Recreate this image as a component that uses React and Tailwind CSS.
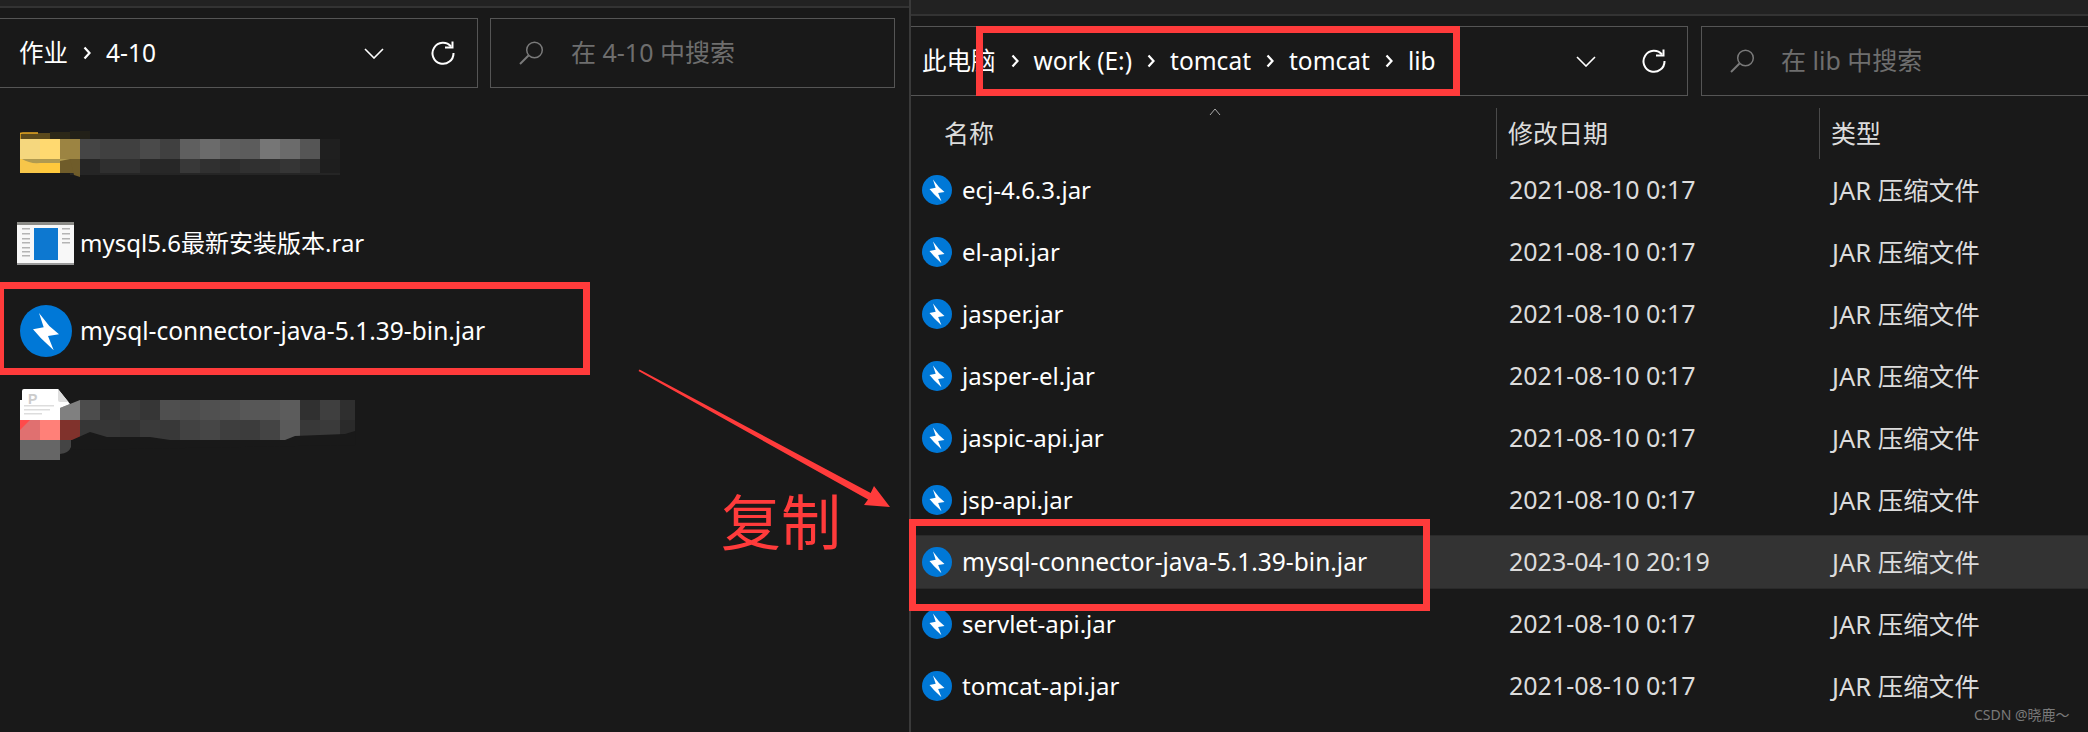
import { Fragment } from 'react';

const files = [
  { name: 'ecj-4.6.3.jar', date: '2021-08-10 0:17' },
  { name: 'el-api.jar', date: '2021-08-10 0:17' },
  { name: 'jasper.jar', date: '2021-08-10 0:17' },
  { name: 'jasper-el.jar', date: '2021-08-10 0:17' },
  { name: 'jaspic-api.jar', date: '2021-08-10 0:17' },
  { name: 'jsp-api.jar', date: '2021-08-10 0:17' },
  { name: 'mysql-connector-java-5.1.39-bin.jar', date: '2023-04-10 20:19', selected: true },
  { name: 'servlet-api.jar', date: '2021-08-10 0:17' },
  { name: 'tomcat-api.jar', date: '2021-08-10 0:17' },
];

const FolderMosaic = [
  ['#f5d77e', '#ffd970', '#9c8442', '#454545', '#404040', '#404040', '#4a4a4a', '#404040', '#5f5f5f', '#6b6b6b', '#5f5f5f', '#5c5c5c', '#767676', '#6b6b6b', '#555555', '#1f1f1f'],
  ['#f7c64a', '#ffc93c', '#6f5c2a', '#252525', '#2f2f2f', '#303030', '#282828', '#272727', '#383838', '#303030', '#2c2c2c', '#303030', '#303030', '#353535', '#2e2e2e', '#1e1e1e'],
];

const PdfMosaic = [
  ['#ffffff', '#f2f2f2', '#808080', '#4c4c4c', '#333333', '#3b3b3b', '#363636', '#4f4f4f', '#4c4c4c', '#505050', '#525252', '#575757', '#575757', '#5c5c5c', '#303030', '#3f3f3f', '#2f2f2f'],
  ['#e07070', '#ff8078', '#80322c', '#363636', '#363636', '#333333', '#3a3a3a', '#383838', '#424242', '#464646', '#3e3e3e', '#3c3c3c', '#444444', '#5a5a5a', '#383838', '#3a3a3a', '#2a2a2a'],
];

const JarIcon = ({ size }) => (
  <svg width={size} height={size} viewBox="0 0 52 52" className="shrink-0">
    <circle cx="26" cy="26" r="26" fill="#0078d7" />
    <polygon points="19,8 29.3,21 39,29.3 28,31 33.7,45.3 21,33.3 13,24.3 23.7,22.3" fill="#ffffff" />
  </svg>
);

const RarIcon = () => (
  <svg width="57" height="43" viewBox="0 0 57 43" className="shrink-0">
    <rect width="57" height="43" rx="1" fill="#f8f8f8" />
    <rect width="57" height="3" fill="#8c8c88" />
    <rect y="41" width="57" height="2" fill="#9a9a9a" />
    <rect x="17" y="6" width="24" height="32" fill="#0d78d0" />
    {[6, 11, 16, 20, 25, 29, 33].map((y) => (
      <rect key={y} x="5" y={y} width="8" height="1.5" fill="#b4b4b4" />
    ))}
    {[6, 11, 16, 20].map((y) => (
      <rect key={y} x="45" y={y} width="8" height="1.5" fill="#b4b4b4" />
    ))}
  </svg>
);

const Chevron = () => (
  <svg width="10" height="16" viewBox="0 0 10 16" className="shrink-0">
    <path d="M2.5 2.5 L7.5 8 L2.5 13.5" fill="none" stroke="#ffffff" strokeWidth="2.2" />
  </svg>
);

const ChevronDown = () => (
  <svg width="20" height="11" viewBox="0 0 20 11" className="shrink-0">
    <path d="M1 1 L10 10 L19 1" fill="none" stroke="#ffffff" strokeWidth="1.6" />
  </svg>
);

const Refresh = () => (
  <svg width="24" height="24" viewBox="0 0 24 24" className="shrink-0">
    <path d="M20 5.5 A10.5 10.5 0 1 0 22.5 12" fill="none" stroke="#ffffff" strokeWidth="2" />
    <path d="M14 6.5 H21.5 V0.5" fill="none" stroke="#ffffff" strokeWidth="2" />
  </svg>
);

const SearchGlass = () => (
  <svg width="25" height="24" viewBox="0 0 25 24" className="shrink-0">
    <circle cx="15.5" cy="9" r="7.8" fill="none" stroke="#7a7a7a" strokeWidth="1.5" />
    <path d="M9.5 14.5 L1 23" fill="none" stroke="#7a7a7a" strokeWidth="2" />
  </svg>
);

const Breadcrumb = ({ parts }) => (
  <div className="flex items-center text-[24.5px] text-white whitespace-nowrap">
    {parts.map((part, i) => (
      <Fragment key={part}>
        {i > 0 && <span className="mx-[14px] flex"><Chevron /></span>}
        <span>{part}</span>
      </Fragment>
    ))}
  </div>
);

const LeftPanel = () => (
  <div className="w-[909px] shrink-0 flex flex-col">
    <div className="h-[8px] shrink-0 bg-[#222222] border-b-2 border-[#333333]" />
    <div className="flex mt-[10px] h-[70px] shrink-0">
      <div className="w-[478px] flex items-center border border-l-0 border-[#555555] pl-[19px] pr-[22px]">
        <Breadcrumb parts={['作业', '4-10']} />
        <div className="ml-auto flex items-center gap-[47px]">
          <ChevronDown />
          <Refresh />
        </div>
      </div>
      <div className="ml-[12px] w-[405px] flex items-center gap-[27px] border border-[#555555] pl-[28px]">
        <SearchGlass />
        <span className="text-[25px] text-[#6e6e6e]">在 4-10 中搜索</span>
      </div>
    </div>
    <div className="mt-[23px] flex flex-col">
      {/* blurred folder */}
      <div className="h-[88px] flex items-center pl-[20px]">
        <svg width="330" height="48" viewBox="0 0 330 48" className="shrink-0">
          <path d="M0 4 Q0 2 3 2 H30 V8 H0 Z" fill="#5c4a1c" />
          <path d="M0 8 V3 Q0 2 3 2 H18" fill="none" stroke="#e8a820" strokeWidth="1.5" />
          <rect x="30" y="1" width="20" height="7" fill="#2c2818" />
          <rect x="50" y="0" width="20" height="8" fill="#222018" />
          {FolderMosaic.map((row, r) =>
            row.map((color, c) => (
              <rect key={`${r}-${c}`} x={c * 20} y={r === 0 ? 8 : 28} width="20" height={r === 0 ? 20 : 14} fill={color} />
            ))
          )}
          <path d="M2 28 Q10 33 20 32 H40 V30 L50 28 V28 H2 Z" fill="#b09a50" />
          <rect x="50" y="42" width="270" height="2" fill="#252525" />
          <path d="M50 28 H60 V46 L54 44 Z" fill="#6f5c2a" />
        </svg>
      </div>
      <div className="h-[88px] flex items-center pl-[17px] gap-[6px]">
        <RarIcon />
        <span className="text-[24px] text-white whitespace-nowrap">mysql5.6最新安装版本.rar</span>
      </div>
      <div className="h-[88px] flex items-center pl-[20px] gap-[8px]">
        <JarIcon size={52} />
        <span className="text-[24.5px] text-white whitespace-nowrap">mysql-connector-java-5.1.39-bin.jar</span>
      </div>
      {/* blurred pdf */}
      <div className="h-[88px] flex items-center pl-[20px]">
        <svg width="350" height="88" viewBox="0 0 350 88" className="shrink-0">
          {PdfMosaic.map((row, r) =>
            row.map((color, c) => (
              <rect key={`${r}-${c}`} x={c * 20} y={r === 0 ? 25 : 45} width={c === 16 ? 15 : 20} height="20" fill={color} />
            ))
          )}
          <polygon points="40,25 60,25 40,33" fill="#191919" />
          <path d="M2 16 Q2 14 4 14 H38 L50 29 L40 33 V45 H2 Z" fill="#ffffff" />
          <path d="M38 14 V25 Q38 27 40 27 H48.5 Z" fill="#dedede" />
          <rect x="4" y="30" width="30" height="1.5" fill="#dddddd" />
          <rect x="4" y="34" width="26" height="1.5" fill="#dddddd" />
          <rect x="4" y="38" width="18" height="1.5" fill="#dddddd" />
          <path d="M0 55 V45 H10 Z" fill="#ff4a4a" />
          <rect x="0" y="65" width="40" height="20" fill="#666666" />
          <path d="M40 65 H51 V72 Q49 78 40 79 Z" fill="#444444" />
          <polygon points="52,65 70,57 87,62 130,62 150,65 265,65 275,61 325,59 335,56 336,70 52,75" fill="#191919" />
          <text x="8" y="29" fontSize="14" fontWeight="700" fill="#cccccc" fontFamily="Liberation Sans, sans-serif">P</text>
        </svg>
      </div>
    </div>
  </div>
);

const RightPanel = () => (
  <div className="flex-1 min-w-0 flex flex-col border-l-2 border-[#3a3a3a]">
    <div className="h-[16px] shrink-0 bg-[#222222] border-b-2 border-[#333333]" />
    <div className="flex mt-[10px] h-[70px] shrink-0">
      <div className="w-[777px] flex items-center border border-l-0 border-[#555555] pl-[11px] pr-[21px]">
        <Breadcrumb parts={['此电脑', 'work (E:)', 'tomcat', 'tomcat ', 'lib']} />
        <div className="ml-auto flex items-center gap-[46px]">
          <ChevronDown />
          <Refresh />
        </div>
      </div>
      <div className="ml-[13px] flex-1 flex items-center gap-[26px] border border-r-0 border-[#555555] pl-[28px]">
        <SearchGlass />
        <span className="text-[25px] text-[#6e6e6e]">在 lib 中搜索</span>
      </div>
    </div>
    <div className="relative mt-[12px] h-[51px] shrink-0 flex items-center text-[25px] text-[#dcdcdc]">
      <span className="absolute left-[298px] top-0">
        <svg width="12" height="8" viewBox="0 0 12 8"><path d="M1 7 L6 1 L11 7" fill="none" stroke="#aaaaaa" strokeWidth="1" /></svg>
      </span>
      <span className="w-[586px] pl-[33px] h-full flex items-center border-r border-[#4a4a4a]">名称</span>
      <span className="w-[323px] pl-[11px] h-full flex items-center border-r border-[#4a4a4a]">修改日期</span>
      <span className="pl-[11px]">类型</span>
    </div>
    {files.map((file) => (
      <div key={file.name} className="h-[62px] shrink-0 py-[4px]">
        <div className={`h-[54px] flex items-center pl-[11px] ${file.selected ? 'bg-[#333333] border-y border-[#2a2a2a]' : ''}`}>
          <div className="w-[587px] flex items-center gap-[10px]">
            <JarIcon size={30} />
            <span className={`text-white whitespace-nowrap ${file.selected ? 'text-[24.5px]' : 'text-[24px]'}`}>{file.name}</span>
          </div>
          <span className="w-[323px] text-[25px] text-[#dcdcdc] whitespace-nowrap">{file.date}</span>
          <span className="text-[25.5px] text-[#dcdcdc] whitespace-nowrap">JAR 压缩文件</span>
        </div>
      </div>
    ))}
  </div>
);

export default function App() {
  return (
    <div className="relative w-[2088px] h-[732px] overflow-hidden flex bg-[#191919] font-['Noto_Sans','Noto_Sans_CJK_SC',sans-serif]">
      <LeftPanel />
      <RightPanel />

      {/* red annotations on top of the screenshot */}
      <div className="absolute left-[-3px] top-[282px] w-[593px] h-[93px] border-[7px] border-[#ff3b3b]" />
      <div className="absolute left-[976px] top-[26px] w-[484px] h-[70px] border-[7px] border-[#ff3b3b]" />
      <div className="absolute left-[909px] top-[519px] w-[521px] h-[92px] border-[7px] border-[#ff3b3b]" />
      <svg className="absolute left-0 top-0 pointer-events-none" width="2088" height="732" viewBox="0 0 2088 732">
        <polygon points="639.5,369.5 870.7,493 874,486 890,507 864,505 868,499.5 638.5,371" fill="#ff3b3b" />
      </svg>
      <span className="absolute left-[721px] top-[480px] text-[60px] leading-[84px] text-[#ff3b3b] whitespace-nowrap">复制</span>
      <span className="absolute left-[1974px] top-[705px] text-[14px] leading-[20px] text-[#7a7a7a] whitespace-nowrap">CSDN @晓鹿～</span>
    </div>
  );
}
